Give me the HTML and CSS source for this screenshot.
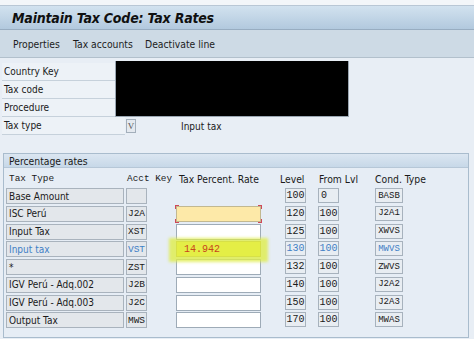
FILE: index.html
```html
<!DOCTYPE html>
<html>
<head>
<meta charset="utf-8">
<link rel="stylesheet" href="styles.css">
</head>
<body>
<div class="top-strip"></div>
<div class="titlebar"><h1 class="title">Maintain Tax Code: Tax Rates</h1></div>
<div class="toolbar">
  <span class="tb-item tb-props">Properties</span>
  <span class="tb-item tb-accts">Tax accounts</span>
  <span class="tb-item">Deactivate line</span>
</div>
<div class="content">
  <div class="form">
    <div class="lbl r1">Country Key</div>
    <div class="lbl r2">Tax code</div>
    <div class="lbl r3">Procedure</div>
    <div class="redact"></div>
    <div class="lbl lbl-wide r4">Tax type</div>
    <div class="vbox r4">V</div>
    <div class="ftext r4">Input tax</div>
  </div>

  <div class="group">
    <div class="group-head">Percentage rates</div>
    <div class="thead">
      <span class="h-type mono">Tax Type</span>
      <span class="h-acct mono">Acct Key</span>
      <span class="h-rate">Tax Percent. Rate</span>
      <span class="h-level">Level</span>
      <span class="h-from">From Lvl</span>
      <span class="h-cond">Cond. Type</span>
    </div>
    <div class="rows">
      <div class="row">
        <div class="c-type cell">Base Amount</div>
        <div class="c-acct cell mono"></div>
        <div class="c-rate none"></div>
        <div class="c-level box mono">100</div>
        <div class="c-from box mono left">0</div>
        <div class="c-cond box mono">BASB</div>
      </div>
      <div class="row">
        <div class="c-type cell">ISC Perú</div>
        <div class="c-acct cell mono">J2A</div>
        <div class="c-rate input focus"></div>
        <div class="c-level box mono">120</div>
        <div class="c-from box mono">100</div>
        <div class="c-cond box mono">J2A1</div>
      </div>
      <div class="row">
        <div class="c-type cell">Input Tax</div>
        <div class="c-acct cell mono">XST</div>
        <div class="c-rate input"></div>
        <div class="c-level box mono">125</div>
        <div class="c-from box mono">100</div>
        <div class="c-cond box mono">XWVS</div>
      </div>
      <div class="row blue">
        <div class="c-type cell">Input tax</div>
        <div class="c-acct cell mono">VST</div>
        <div class="c-rate input hl mono">14.942</div>
        <div class="c-level box mono">130</div>
        <div class="c-from box mono">100</div>
        <div class="c-cond box mono">MWVS</div>
      </div>
      <div class="row">
        <div class="c-type cell">*</div>
        <div class="c-acct cell mono">ZST</div>
        <div class="c-rate input"></div>
        <div class="c-level box mono">132</div>
        <div class="c-from box mono">100</div>
        <div class="c-cond box mono">ZWVS</div>
      </div>
      <div class="row">
        <div class="c-type cell">IGV Perú - Adq.002</div>
        <div class="c-acct cell mono">J2B</div>
        <div class="c-rate input"></div>
        <div class="c-level box mono">140</div>
        <div class="c-from box mono">100</div>
        <div class="c-cond box mono">J2A2</div>
      </div>
      <div class="row">
        <div class="c-type cell">IGV Perú - Adq.003</div>
        <div class="c-acct cell mono">J2C</div>
        <div class="c-rate input"></div>
        <div class="c-level box mono">150</div>
        <div class="c-from box mono">100</div>
        <div class="c-cond box mono">J2A3</div>
      </div>
      <div class="row">
        <div class="c-type cell">Output Tax</div>
        <div class="c-acct cell mono">MWS</div>
        <div class="c-rate input"></div>
        <div class="c-level box mono">170</div>
        <div class="c-from box mono">100</div>
        <div class="c-cond box mono">MWAS</div>
      </div>
    </div>
  </div>
</div>
</body>
</html>
```

FILE: styles.css
```css
* { box-sizing: border-box; }
html, body { margin: 0; padding: 0; }
body {
  width: 474px;
  height: 339px;
  overflow: hidden;
  background: #e8eef5;
  font-family: "DejaVu Sans Condensed", "Liberation Sans", sans-serif;
  font-size: 10px;
  color: #1a1a1a;
}
.mono { font-family: "Liberation Mono", "DejaVu Sans Mono", monospace; }

.top-strip {
  height: 6px;
  background: #f3f6f9;
  border-bottom: 1px solid #b9c7d5;
}
.titlebar {
  height: 24px;
  background: linear-gradient(#d2e2ef, #b2c9de);
  border-bottom: 1px solid #98adc1;
  display: flex;
  align-items: center;
  padding-left: 12px;
}
.title {
  margin: 0;
  font-size: 14px;
  font-weight: bold;
  font-style: italic;
  color: #101010;
  letter-spacing: -0.2px;
}
.toolbar {
  height: 28px;
  background: #cddae5;
  border-bottom: 1px solid #b2c0cc;
  display: flex;
  align-items: center;
  padding-left: 13px;
  font-size: 10.3px;
  color: #1c1c1c;
}
.tb-item { display: block; }
.tb-props { width: 60px; }
.tb-accts { width: 72px; }

.content { padding: 4px 0 0 2px; }

.form {
  display: grid;
  grid-template-columns: 113px 12px 10px 43px 1fr;
  grid-template-rows: 18px 18px 18px 18px;
  width: 360px;
  padding-top: 1px;
}
.lbl {
  grid-column: 1;
  border-bottom: 1px solid #c6d1db;
  background: #edf2f7;
  padding-left: 2px;
  display: flex;
  align-items: center;
  font-size: 10px;
}
.lbl-wide { grid-column: 1 / 3; margin-right: 2px; }
.r1 { grid-row: 1; }
.r2 { grid-row: 2; }
.r3 { grid-row: 3; }
.r4 { grid-row: 4; }
.redact {
  grid-column: 2 / 6;
  grid-row: 1 / 4;
  width: 234px;
  margin-top: -2px;
  background: #000;
  border: 1px solid #9aa6b2;
  border-top: 0;
}
.vbox {
  grid-column: 3;
  margin: 2px 0 2px -1px;
  width: 10px;
  background: #e4e9ef;
  border: 1px solid #a3afbb;
  font-family: "Liberation Serif", serif;
  font-size: 9px;
  color: #555;
  display: flex;
  align-items: center;
  justify-content: center;
}
.ftext {
  grid-column: 5;
  display: flex;
  align-items: center;
  font-size: 10px;
  padding-left: 1px;
}

.group {
  margin: 18px 0 0 1px;
  width: 466px;
  height: 185px;
  border: 1px solid #a9bccd;
  border-top: 0;
  background: #e6edf5;
}
.group-head {
  height: 15px;
  background: linear-gradient(#dbe6f1, #c7d8e8);
  border-top: 1px solid #a9bccd;
  border-bottom: 1px solid #b6c7d7;
  padding-left: 5px;
  display: flex;
  align-items: center;
  font-size: 10.3px;
}
.thead {
  display: flex;
  align-items: center;
  height: 20px;
  padding-left: 5px;
  padding-top: 1px;
  font-size: 10.3px;
  white-space: nowrap;
}
.thead .mono { font-size: 9.4px; }
.h-type { width: 118px; }
.h-acct { width: 52px; }
.h-rate { width: 101px; }
.h-level { width: 39px; }
.h-from { width: 56px; }

.rows {
  display: flex;
  flex-direction: column;
  gap: 1.75px;
  padding-left: 2px;
}
.row {
  display: flex;
  height: 16px;
  align-items: center;
}
.cell {
  height: 16px;
  background: #e3e7eb;
  border: 1px solid #a9b3bd;
  display: flex;
  align-items: center;
  padding-left: 2px;
  font-size: 10px;
  white-space: nowrap;
}
.cell.mono { font-size: 9.5px; justify-content: center; padding-left: 0; }
.c-type { width: 118px; }
.c-acct { width: 21px; margin-left: 2px; }
.c-rate { width: 85px; margin-left: 29px; height: 16px; }
.input {
  background: #ffffff;
  border: 1px solid #9eabb7;
  position: relative;
  display: flex;
  align-items: center;
  padding-left: 7px;
  font-size: 10px;
}
.focus { background: #fde9a8; border-color: #c2b890; }
.focus::after {
  content: "";
  position: absolute;
  inset: -2px;
  background:
    linear-gradient(#cf4858, #cf4858) left top / 4px 1px no-repeat,
    linear-gradient(#cf4858, #cf4858) left top / 1px 4px no-repeat,
    linear-gradient(#cf4858, #cf4858) right top / 4px 1px no-repeat,
    linear-gradient(#cf4858, #cf4858) right top / 1px 4px no-repeat,
    linear-gradient(#cf4858, #cf4858) left bottom / 4px 1px no-repeat,
    linear-gradient(#cf4858, #cf4858) left bottom / 1px 4px no-repeat,
    linear-gradient(#cf4858, #cf4858) right bottom / 4px 1px no-repeat,
    linear-gradient(#cf4858, #cf4858) right bottom / 1px 4px no-repeat;
}
.hl {
  background: #f9f23a;
  border-color: #b8b040;
  color: #c8461c;
  z-index: 1;
}
.hl::before {
  content: "";
  position: absolute;
  top: -4px;
  bottom: -6px;
  left: -8px;
  right: -8px;
  background: rgba(222, 236, 74, 0.8);
  filter: blur(1.5px);
  z-index: -1;
}
.box {
  height: 15px;
  width: 21px;
  background: #e8edf2;
  border: 1px solid #a7b2bd;
  display: flex;
  align-items: center;
  justify-content: center;
  font-size: 10px;
  align-self: flex-start;
}
.box.left { justify-content: flex-start; padding-left: 2px; }
.c-level { margin-left: 24px; }
.c-from { margin-left: 12px; }
.c-cond { width: 28px; margin-left: 36px; font-size: 9px; }

.blue .cell, .blue .box { color: #3f80c6; }
```
